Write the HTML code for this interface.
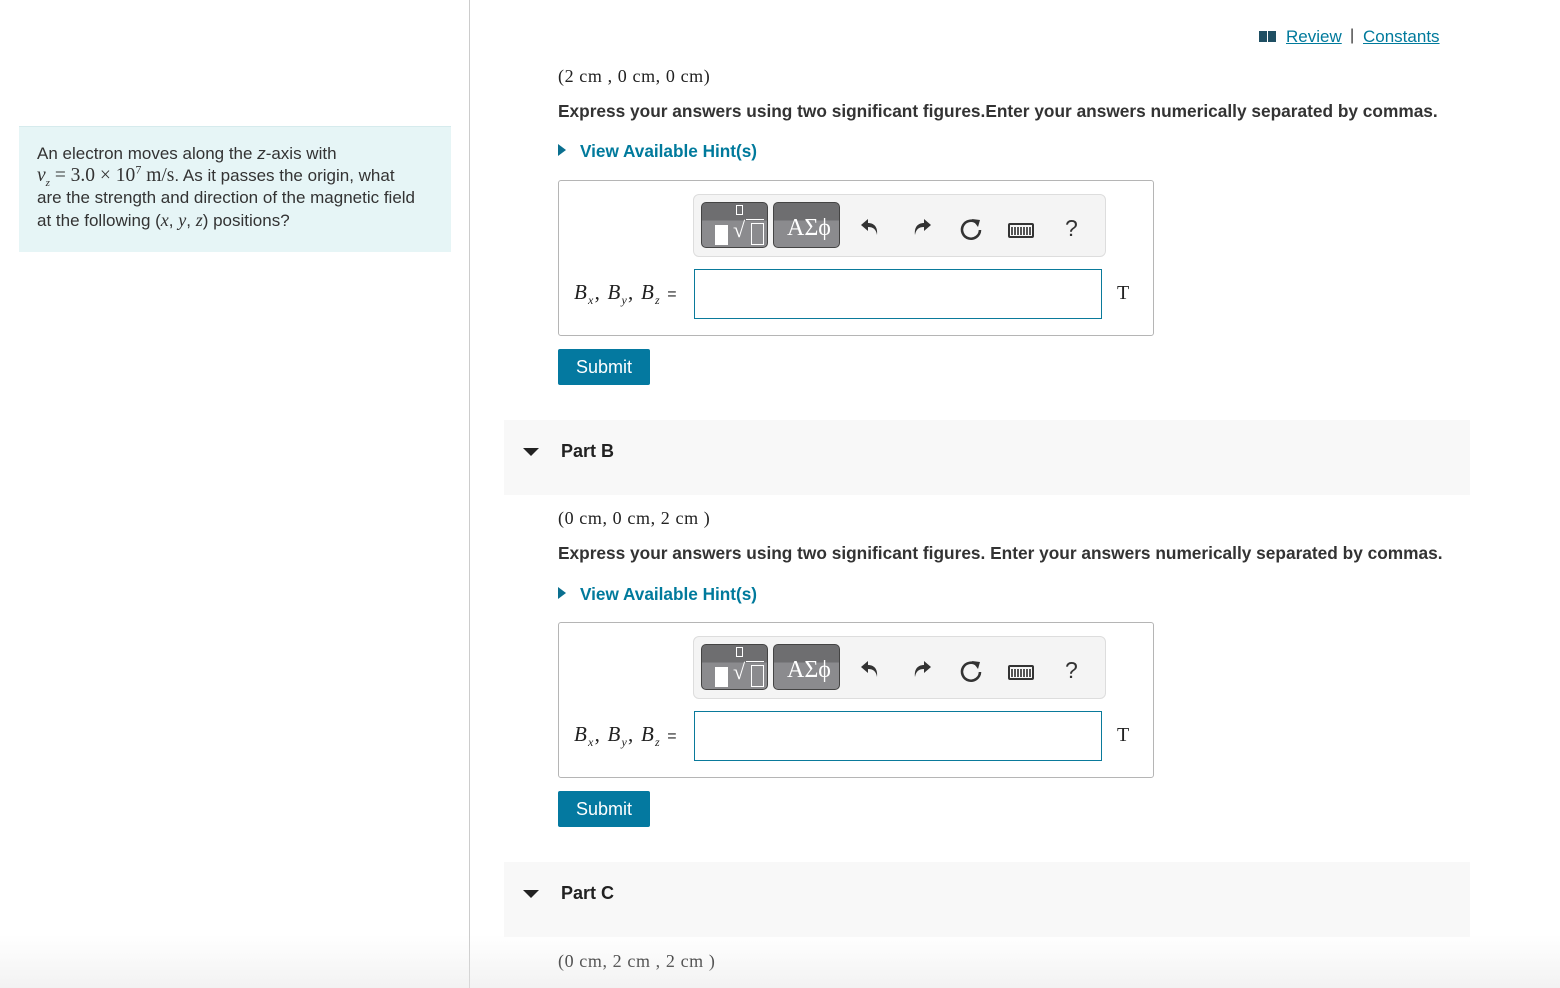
<!DOCTYPE html>
<html><head><meta charset="utf-8"><style>
*{margin:0;padding:0;box-sizing:border-box}
body{width:1560px;height:988px;position:relative;overflow:hidden;background:#fff;font-family:"Liberation Sans",Arial,sans-serif;color:#222}
.a{position:absolute;white-space:nowrap}
.serif{font-family:"Liberation Serif","DejaVu Serif",serif}
.pos{font-family:"Liberation Serif",serif;font-size:18px;letter-spacing:0.6px;color:#222}
.exp{font-size:17.3px;font-weight:bold;color:#333}
.hint{font-size:17.2px;font-weight:bold;color:#007a9c}
.box{border:1px solid #b5b5b5;border-radius:3px;width:596px;height:156px}
.tb{background:#f4f4f4;border:1px solid #ddd;border-radius:6px;width:413px;height:63px}
.btn{width:67px;height:46px;border-radius:5px;background:linear-gradient(#6e6e70 0,#6e6e70 40%,#8b8b8e 40%,#8b8b8e 100%);border:1px solid #444}
.inp{width:408px;height:50px;border:1px solid #0a7a9b}
.sub{width:92px;height:36px;background:#0479a0;border-radius:2px;color:#fff;font-size:18px;text-align:center;line-height:36px}
.ph{background:#f8f8f8;width:966px;height:75px;left:504px}
.ph span{position:absolute;left:57px;top:21px;font-size:18px;font-weight:bold;color:#222}
.tri{position:absolute;left:19px;top:28px;width:0;height:0;border-left:8px solid transparent;border-right:8px solid transparent;border-top:8px solid #222}
.lbl{font-family:"Liberation Serif",serif;font-size:21px;letter-spacing:1.2px}
</style></head><body>
<div class="a" style="left:469px;top:0;width:1px;height:988px;background:#ccc"></div>
<div class="a" style="left:19px;top:126px;width:432px;height:126px;background:#e6f5f6;border-top:1px solid #d6ebed"></div>
<div class="a" style="left:37px;top:143px;font-size:17px;line-height:22px;color:#333">An electron moves along the <i>z</i>-axis with<br><span class="serif" style="font-size:19.5px;line-height:18px"><i>v<sub style="font-size:11px;line-height:0">z</sub></i> = 3.0 × 10<sup style="font-size:12px;line-height:0">7</sup> m/s</span>. As it passes the origin, what<br>are the strength and direction of the magnetic field<br>at the following (<i class="serif" style="font-size:18px">x</i>, <i class="serif" style="font-size:18px">y</i>, <i class="serif" style="font-size:18px">z</i>) positions?</div>

<div class="a" style="left:1259px;top:31px;width:17px;height:11px;background:#1f4f63"></div>
<div class="a" style="left:1267px;top:31px;width:1px;height:11px;background:#fff"></div>
<div class="a" style="left:1286px;top:27px;font-size:17px;color:#007a9c;text-decoration:underline">Review</div>
<div class="a" style="left:1350px;top:27px;font-size:16px;color:#333">|</div>
<div class="a" style="left:1363px;top:27px;font-size:17px;color:#007a9c;text-decoration:underline">Constants</div>

<div class="a pos" style="left:558px;top:66px">(2 cm , 0 cm, 0 cm)</div>
<div class="a exp" style="left:558px;top:101px">Express your answers using two significant figures.Enter your answers numerically separated by commas.</div>
<div class="a" style="left:558px;top:144px;border-left:8px solid #0a6f8f;border-top:6px solid transparent;border-bottom:6px solid transparent"></div>
<div class="a hint" style="left:580px;top:141px">View Available Hint(s)</div>

<div class="a" style="left:0;top:180px;width:1560px;height:210px">
<div class="a box" style="left:558px;top:0"></div>
<div class="a tb" style="left:693px;top:14px"></div>
<div class="a btn" style="left:701px;top:22px"><div class="a" style="left:13px;top:22px;width:13px;height:20px;background:#fff"></div><div class="a serif" style="left:31px;top:14px;color:#fff;font-size:22px">√</div><div class="a" style="left:44px;top:16px;width:18px;height:1px;background:#fff"></div><div class="a" style="left:34px;top:2px;width:7px;height:10px;border:1px solid #fff"></div><div class="a" style="left:49px;top:20px;width:13px;height:22px;border:1px solid #fff"></div></div>
<div class="a btn" style="left:773px;top:22px"><div class="a serif" style="left:13px;top:12px;color:#fff;font-size:24px">ΑΣϕ</div></div>
<div class="a" style="left:860px;top:37px"><svg width="20" height="22" viewBox="0 0 20 22"><path d="M8 2 L1 8 L8 14 V10 C13 10 16 12 17 18 C18 10 14 6 8 6Z" fill="#333"/></svg></div>
<div class="a" style="left:912px;top:37px"><svg width="20" height="22" viewBox="0 0 20 22"><path d="M12 2 L19 8 L12 14 V10 C7 10 4 12 3 18 C2 10 6 6 12 6Z" fill="#333"/></svg></div>
<div class="a" style="left:959px;top:37px"><svg width="24" height="24" viewBox="0 0 24 24"><path d="M18 6 A9 9 0 1 0 21 13" fill="none" stroke="#333" stroke-width="2.6"/><path d="M13 2 L21 3 L19 10Z" fill="#333"/></svg></div>
<div class="a" style="left:1008px;top:43px;width:26px;height:15px;border:2px solid #333;border-radius:2px;background:repeating-linear-gradient(90deg,#fff 0 1px,#555 1px 3px);background-size:100% 8px;background-repeat:no-repeat;background-position:0 2px"></div>
<div class="a" style="left:1065px;top:35px;font-size:23px;color:#333">?</div>
<div class="a lbl" style="left:574px;top:100px"><i>B<sub style="font-size:12px">x</sub></i>, <i>B<sub style="font-size:12px">y</sub></i>, <i>B<sub style="font-size:12px">z</sub></i> <span style="font-family:'Liberation Sans';font-size:16px">=</span></div>
<div class="a inp" style="left:694px;top:89px"></div>
<div class="a serif" style="left:1117px;top:102px;font-size:20px">T</div>
<div class="a sub" style="left:558px;top:169px">Submit</div>
</div>

<div class="a ph" style="top:420px"><div class="tri"></div><span>Part B</span></div>
<div class="a pos" style="left:558px;top:508px">(0 cm, 0 cm, 2 cm )</div>
<div class="a exp" style="left:558px;top:543px">Express your answers using two significant figures. Enter your answers numerically separated by commas.</div>
<div class="a" style="left:558px;top:587px;border-left:8px solid #0a6f8f;border-top:6px solid transparent;border-bottom:6px solid transparent"></div>
<div class="a hint" style="left:580px;top:584px">View Available Hint(s)</div>

<div class="a" style="left:0;top:622px;width:1560px;height:210px">
<div class="a box" style="left:558px;top:0"></div>
<div class="a tb" style="left:693px;top:14px"></div>
<div class="a btn" style="left:701px;top:22px"><div class="a" style="left:13px;top:22px;width:13px;height:20px;background:#fff"></div><div class="a serif" style="left:31px;top:14px;color:#fff;font-size:22px">√</div><div class="a" style="left:44px;top:16px;width:18px;height:1px;background:#fff"></div><div class="a" style="left:34px;top:2px;width:7px;height:10px;border:1px solid #fff"></div><div class="a" style="left:49px;top:20px;width:13px;height:22px;border:1px solid #fff"></div></div>
<div class="a btn" style="left:773px;top:22px"><div class="a serif" style="left:13px;top:12px;color:#fff;font-size:24px">ΑΣϕ</div></div>
<div class="a" style="left:860px;top:37px"><svg width="20" height="22" viewBox="0 0 20 22"><path d="M8 2 L1 8 L8 14 V10 C13 10 16 12 17 18 C18 10 14 6 8 6Z" fill="#333"/></svg></div>
<div class="a" style="left:912px;top:37px"><svg width="20" height="22" viewBox="0 0 20 22"><path d="M12 2 L19 8 L12 14 V10 C7 10 4 12 3 18 C2 10 6 6 12 6Z" fill="#333"/></svg></div>
<div class="a" style="left:959px;top:37px"><svg width="24" height="24" viewBox="0 0 24 24"><path d="M18 6 A9 9 0 1 0 21 13" fill="none" stroke="#333" stroke-width="2.6"/><path d="M13 2 L21 3 L19 10Z" fill="#333"/></svg></div>
<div class="a" style="left:1008px;top:43px;width:26px;height:15px;border:2px solid #333;border-radius:2px;background:repeating-linear-gradient(90deg,#fff 0 1px,#555 1px 3px);background-size:100% 8px;background-repeat:no-repeat;background-position:0 2px"></div>
<div class="a" style="left:1065px;top:35px;font-size:23px;color:#333">?</div>
<div class="a lbl" style="left:574px;top:100px"><i>B<sub style="font-size:12px">x</sub></i>, <i>B<sub style="font-size:12px">y</sub></i>, <i>B<sub style="font-size:12px">z</sub></i> <span style="font-family:'Liberation Sans';font-size:16px">=</span></div>
<div class="a inp" style="left:694px;top:89px"></div>
<div class="a serif" style="left:1117px;top:102px;font-size:20px">T</div>
<div class="a sub" style="left:558px;top:169px">Submit</div>
</div>

<div class="a ph" style="top:862px"><div class="tri"></div><span>Part C</span></div>
<div class="a pos" style="left:558px;top:951px">(0 cm, 2 cm , 2 cm )</div>
<div class="a" style="left:0;top:935px;width:1560px;height:53px;background:linear-gradient(rgba(240,240,240,0),rgba(230,230,230,0.5))"></div>
</body></html>
